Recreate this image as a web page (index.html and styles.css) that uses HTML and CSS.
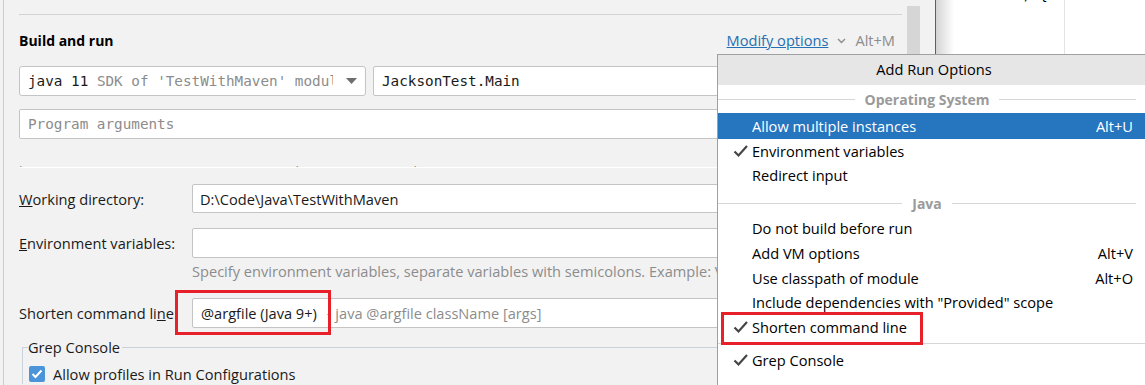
FILE: index.html
```html
<!DOCTYPE html>
<html lang="en">
<head>
  <meta charset="UTF-8">
  <title>Run Configuration - Modify options</title>
  <link rel="stylesheet" href="styles.css">
</head>
<body>
  <div class="screen">
    <!-- Run configuration dialog -->
    <div class="dialog">
      <div class="content">
        <div class="top-rule"></div>

        <div class="section-head">
          <h2>Build and run</h2>
          <div class="modify">
            <a href="#">Modify options</a>
            <svg class="chevron" width="9" height="6" viewBox="0 0 9 6"><path d="M1 1 L4.5 4.5 L8 1" fill="none" stroke="#8c8c8c" stroke-width="1.4"/></svg>
            <span class="key">Alt+M</span>
          </div>
        </div>

        <div class="run-row">
          <div class="combo mono">
            <span class="combo-text"><span class="dark">java 11</span> <span class="dim">SDK of 'TestWithMaven' module</span></span>
            <svg class="arrow" width="11" height="6" viewBox="0 0 11 6"><path d="M0 0 H11 L5.5 6 Z" fill="#6e6e6e"/></svg>
          </div>
          <div class="field mono main-class">JacksonTest.Main</div>
        </div>

        <div class="field mono placeholder args">Program arguments</div>

        <div class="glitch"><span>java 11 SDK of 'TestWithMaven' module -cp TestWithMaven JacksonTest.Main</span></div>

        <div class="form-row workdir">
          <label><u>W</u>orking directory:</label>
          <div class="field">D:\Code\Java\TestWithMaven</div>
        </div>

        <div class="form-row envvars">
          <label><u>E</u>nvironment variables:</label>
          <div class="field"></div>
        </div>
        <div class="hint">Specify environment variables, separate variables with semicolons. Example: VAR=value</div>

        <div class="form-row shorten">
          <label>Shorten command li<u>n</u>e:</label>
          <div class="field"><span class="dark">@argfile (Java 9+)</span><span class="dim sep">- java @argfile className [args]</span></div>
        </div>

        <fieldset class="group">
          <legend>Grep Console</legend>
          <label class="check">
            <span class="box"><svg width="12" height="10" viewBox="0 0 12 10"><path d="M1.5 5 L4.5 8 L10.5 1.5" fill="none" stroke="#fff" stroke-width="2"/></svg></span>
            Allow profiles in Run Configurations
          </label>
        </fieldset>
      </div>
      <div class="scrollbar"><div class="thumb"></div></div>
    </div>

    <!-- Editor behind the dialog -->
    <div class="editor">
      <div class="code">rowable io) {</div>
      <div class="margin-line"></div>
    </div>
  </div>

  <!-- Add Run Options popup -->
  <div class="popup">
    <div class="popup-title">Add Run Options</div>
    <div class="menu-sep"><span>Operating System</span></div>
    <div class="menu-item selected"><span class="tick"></span><span class="name">Allow multiple instances</span><span class="shortcut">Alt+U</span></div>
    <div class="menu-item short"><span class="tick"><svg width="16" height="14" viewBox="0 0 16 14"><path d="M1.5 7.5 L5.5 11.5 L14 2" fill="none" stroke="#454545" stroke-width="2.2"/></svg></span><span class="name">Environment variables</span></div>
    <div class="menu-item short"><span class="tick"></span><span class="name">Redirect input</span></div>
    <div class="menu-sep java"><span>Java</span></div>
    <div class="menu-item"><span class="tick"></span><span class="name">Do not build before run</span></div>
    <div class="menu-item"><span class="tick"></span><span class="name">Add VM options</span><span class="shortcut">Alt+V</span></div>
    <div class="menu-item"><span class="tick"></span><span class="name">Use classpath of module</span><span class="shortcut">Alt+O</span></div>
    <div class="menu-item"><span class="tick"></span><span class="name">Include dependencies with "Provided" scope</span></div>
    <div class="menu-item"><span class="tick"><svg width="16" height="14" viewBox="0 0 16 14"><path d="M1.5 7.5 L5.5 11.5 L14 2" fill="none" stroke="#454545" stroke-width="2.2"/></svg></span><span class="name">Shorten command line</span></div>
    <div class="menu-line"></div>
    <div class="menu-item"><span class="tick"><svg width="16" height="14" viewBox="0 0 16 14"><path d="M1.5 7.5 L5.5 11.5 L14 2" fill="none" stroke="#454545" stroke-width="2.2"/></svg></span><span class="name">Grep Console</span></div>
  </div>

  <!-- Red annotation boxes -->
  <div class="mark mark-field"></div>
  <div class="mark mark-menu"></div>
</body>
</html>
```

FILE: styles.css
```css
html, body {
  margin: 0;
  padding: 0;
}
body {
  width: 1145px;
  height: 385px;
  overflow: hidden;
  position: relative;
  background-color: #f2f2f2;
  font-family: "Open Sans", "Noto Sans", sans-serif;
  font-size: 14.6px;
  color: #1a1a1a;
}
.screen {
  display: flex;
  height: 385px;
}
.mono {
  font-family: "DejaVu Sans Mono", "Liberation Mono", monospace;
  font-size: 14.3px;
}
.dark {
  color: #1a1a1a;
}
.dim {
  color: #8c8c8c;
}

/* dialog */
.dialog {
  display: flex;
  box-sizing: border-box;
  width: 933px;
  margin-left: 3px;
  border-left: 1px solid #cdcdcd;
  border-right: 1px solid #5f5f5f;
}
.content {
  width: 883px;
  padding-left: 15px;
  display: flex;
  flex-direction: column;
}
.top-rule {
  margin-top: 14px;
  border-top: 1px solid #d3d3d3;
}
.section-head {
  display: flex;
  align-items: center;
  justify-content: space-between;
  height: 20px;
  margin-top: 15px;
}
.section-head h2 {
  margin: 0;
  font-size: 14px;
  font-weight: bold;
  color: #000;
}
.modify {
  display: flex;
  align-items: center;
  margin-right: 7px;
}
.modify a {
  color: #2470b3;
  text-decoration: underline;
}
.chevron {
  margin: 2px 9px 0 9px;
}
.key {
  color: #8c8c8c;
}

.field, .combo {
  height: 30px;
  box-sizing: border-box;
  border: 1px solid #c4c4c4;
  border-radius: 2px;
  background-color: #fff;
  display: flex;
  align-items: center;
  padding-left: 8px;
  white-space: nowrap;
  overflow: hidden;
}
.run-row {
  display: flex;
  gap: 7px;
  margin-top: 16px;
}
.combo {
  width: 347px;
  border-radius: 3px;
  justify-content: space-between;
  padding-right: 8px;
}
.combo-text {
  overflow: hidden;
  width: 305px;
}
.main-class {
  flex: 1;
}
.args {
  margin-top: 13px;
}
.placeholder {
  color: #8c8c8c;
}

.glitch {
  margin-top: 27px;
  height: 1px;
  overflow: hidden;
  border-bottom: 1px solid #fff;
  font-size: 13px;
  color: #888;
  white-space: nowrap;
}
.glitch span {
  display: block;
  margin-top: -11px;
  line-height: 12px;
  letter-spacing: 0.6px;
}

.form-row {
  display: flex;
  align-items: center;
}
.form-row label {
  width: 173px;
  flex: none;
  white-space: nowrap;
}
.form-row .field {
  flex: 1;
  padding-left: 7px;
}
.workdir {
  margin-top: 16px;
}
.workdir .field {
  height: 29px;
}
.envvars {
  margin-top: 15px;
}
.hint {
  margin-top: 3px;
  margin-left: 173px;
  line-height: 20px;
  color: #8c8c8c;
  white-space: nowrap;
}
.shorten {
  margin-top: 17px;
}
.shorten .field {
  padding-left: 8px;
}
.sep {
  margin-left: 10px;
}

.group {
  margin: 11px 0 0 3px;
  padding: 0 0 0 6px;
  border: none;
  border-top: 1px solid #c9d2dc;
  border-left: 1px solid #c9d2dc;
}
.group legend {
  padding: 0 2px 0 0;
  margin-left: -1px;
  line-height: 16px;
}
.check {
  display: flex;
  align-items: center;
  gap: 8px;
  margin-top: 9px;
}
.box {
  width: 16px;
  height: 16px;
  border-radius: 2px;
  background-color: #4b94da;
  display: flex;
  align-items: center;
  justify-content: center;
}

.scrollbar {
  width: 13px;
  margin-left: 5px;
  padding-top: 6px;
}
.thumb {
  height: 50px;
  background-color: #d6d6d6;
}

/* editor */
.editor {
  flex: 1;
  background-color: #fff;
  position: relative;
  overflow: hidden;
  background-image: linear-gradient(to right, #d4d4d4, #fff 18px);
}
.code {
  font-family: "DejaVu Sans Mono", monospace;
  font-size: 14px;
  line-height: 16px;
  margin-top: -13px;
  margin-left: 2px;
  color: #000;
  white-space: nowrap;
}
.margin-line {
  position: absolute;
  left: 128px;
  top: 0;
  bottom: 0;
  border-left: 1px solid #e3e3e3;
}

/* popup */
.popup {
  position: absolute;
  left: 717px;
  top: 54px;
  width: 434px;
  height: 340px;
  box-sizing: border-box;
  border: 1px solid #a0a0a0;
  background-color: #fff;
}
.popup-title {
  height: 30px;
  line-height: 29px;
  text-align: center;
  background-color: #e6e6e6;
  color: #000;
}
.menu-sep {
  height: 28px;
  display: flex;
  align-items: center;
  gap: 10px;
  color: #9a9a9a;
  font-weight: bold;
  font-size: 14px;
  padding-right: 14px;
}
.menu-sep::before, .menu-sep::after {
  content: "";
  flex: 1;
  border-top: 1px solid #d6d6d6;
}
.menu-sep.java {
  height: 29px;
  padding-top: 3px;
  box-sizing: border-box;
}
.menu-item {
  height: 24.7px;
  display: flex;
  align-items: center;
  padding-right: 17px;
  color: #000;
}
.menu-item.selected {
  height: 26px;
  background-color: #2675bf;
  color: #fff;
}
.menu-item.short {
  height: 24px;
}
.tick {
  width: 34px;
  flex: none;
  display: flex;
  justify-content: center;
  padding-left: 12px;
  box-sizing: border-box;
}
.name {
  flex: 1;
}
.menu-line {
  margin: 4px 0 3px;
  border-top: 1px solid #d6d6d6;
}

/* annotations */
.mark {
  position: absolute;
  border: 3px solid #e8202a;
  box-sizing: border-box;
}
.mark-field {
  left: 175px;
  top: 290px;
  width: 156px;
  height: 45px;
}
.mark-menu {
  left: 721px;
  top: 312px;
  width: 202px;
  height: 33px;
}
```
